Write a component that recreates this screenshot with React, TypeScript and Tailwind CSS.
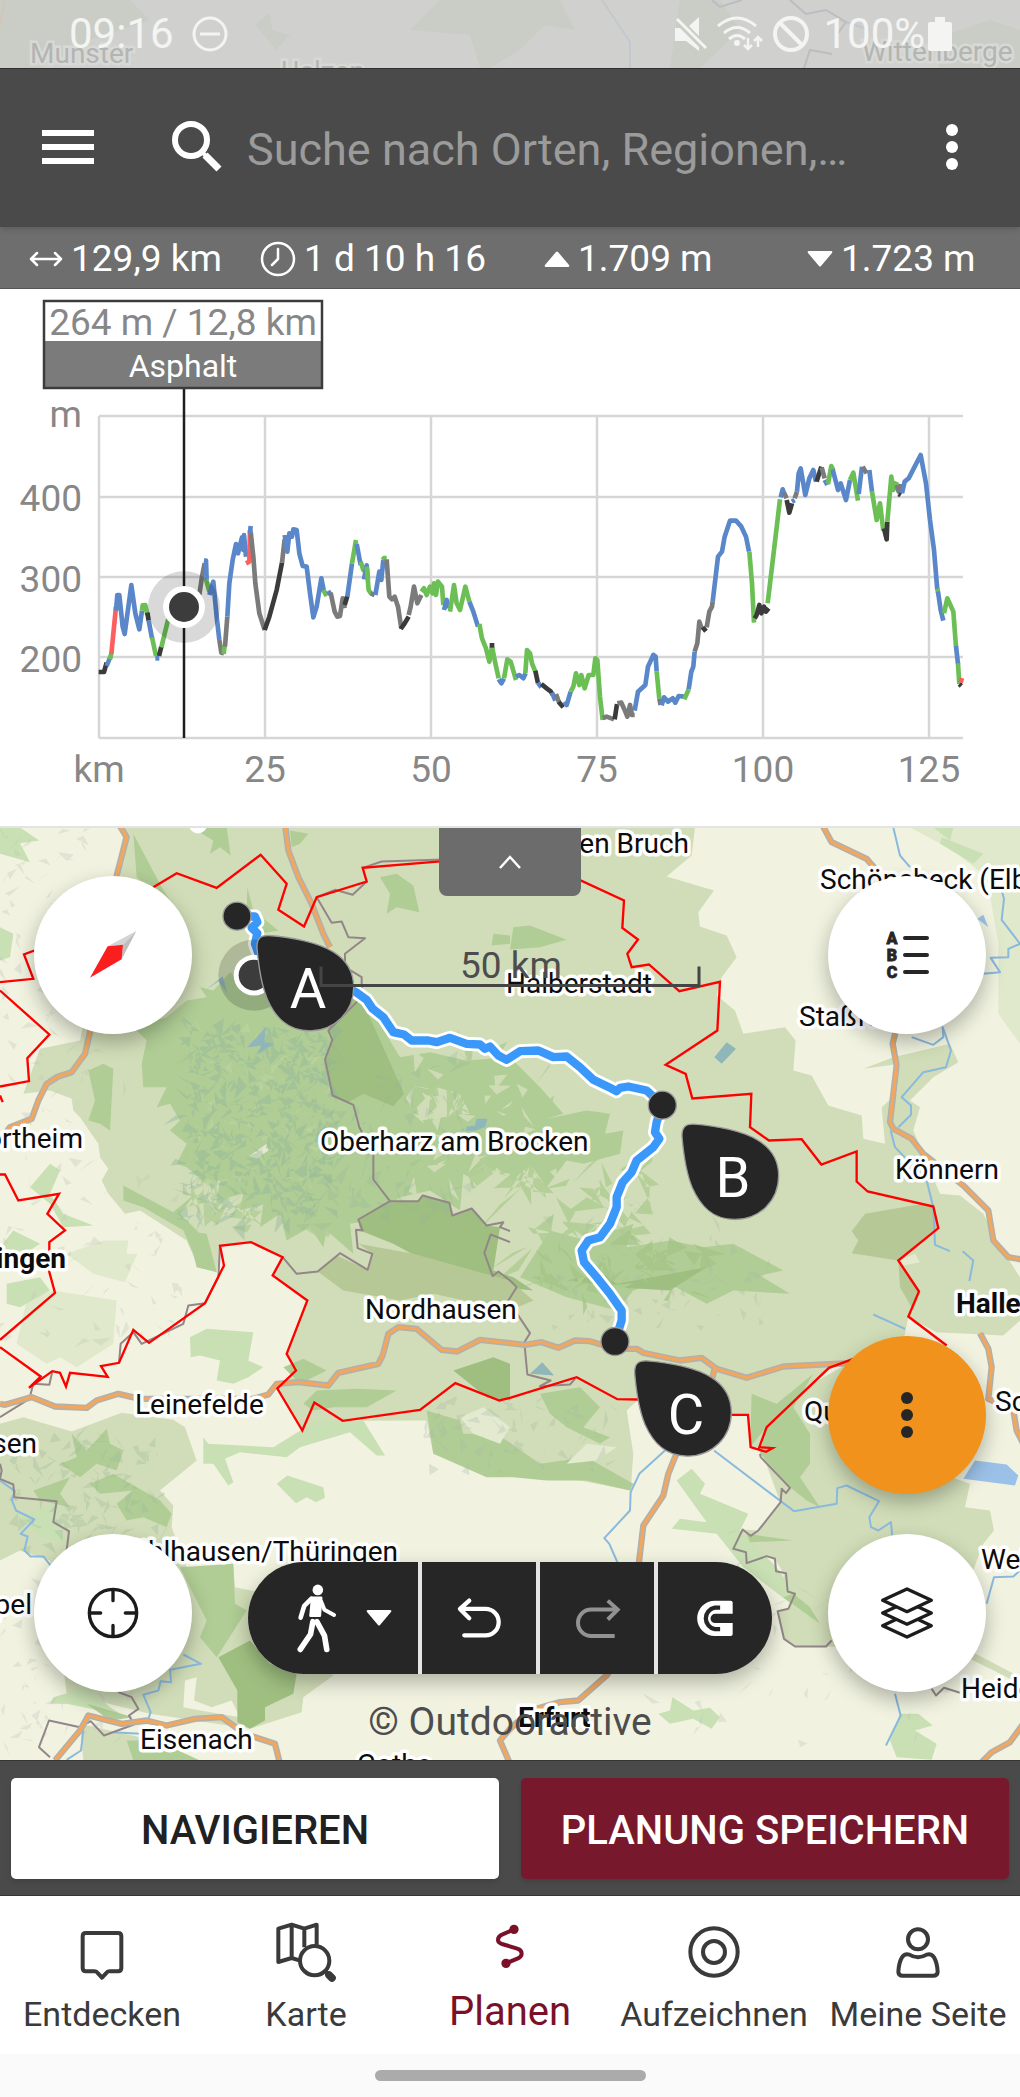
import React from "react";

type Surface = "asphalt" | "road" | "path" | "trail" | "steep";

const surfaceColors: Record<Surface, string> = {
  asphalt: "#7b7b7b",
  road: "#3b3b3b",
  path: "#5987ca",
  trail: "#6cbf55",
  steep: "#fd5e60",
};

// Elevation profile, split by surface. Three units per chart pixel.
const profile: [Surface, string][] = [
  ["road", "296,1146 312,1146 320,1118"],
  ["path", "320,1128 332,1098"],
  ["trail", "330,1108 334,1090"],
  ["steep", "334,1092 348,950"],
  ["path", "348,962 352,915 358,915 368,1010 374,1032 394,885 406,970 418,1018 426,962"],
  ["trail", "426,962 428,946 436,945 442,975"],
  ["road", "442,968 446,992"],
  ["path", "446,992 456,1045"],
  ["trail", "456,1042 468,1098"],
  ["path", "466,1105 478,1105"],
  ["road", "477,1098 484,1070"],
  ["trail", "484,1072 504,990 530,950 590,930"],
  ["asphalt", "598,915 606,860 614,820"],
  ["path", "612,812 618,812 620,870"],
  ["trail", "618,868 628,905"],
  ["path", "628,915 640,875 650,980 658,1050"],
  ["asphalt", "658,1050 664,1088 672,1090"],
  ["trail", "671,1092 674,1065"],
  ["asphalt", "675,1070 682,980"],
  ["path", "682,980 688,880 698,810 708,762 714,790 726,742 730,780 732,735 738,800"],
  ["steep", "738,820 748,815 750,720"],
  ["asphalt", "752,725 760,800 766,880 778,970 794,1020"],
  ["path", "750,732 752,708"],
  ["road", "794,1020 808,980 830,900 846,818"],
  ["asphalt", "846,818 854,748"],
  ["path", "854,735 862,785 868,730 876,740 880,718 890,720 898,790 908,828 920,830 930,910 940,982 950,950 964,865 972,905"],
  ["trail", "970,900 980,918"],
  ["path", "982,912 994,905"],
  ["asphalt", "992,908 1004,965 1012,980 1020,978 1028,925 1034,955"],
  ["road", "1034,945 1042,918"],
  ["path", "1042,920 1056,820"],
  ["trail", "1056,820 1068,750"],
  ["path", "1070,762 1082,825"],
  ["trail", "1082,815 1090,840 1094,832"],
  ["path", "1092,868 1100,826 1104,870"],
  ["trail", "1100,830 1106,900 1114,912"],
  ["asphalt", "1112,910 1124,915"],
  ["path", "1126,915 1138,845 1144,870 1150,810"],
  ["trail", "1148,810 1152,804 1160,804"],
  ["asphalt", "1160,808 1168,920 1176,928 1184,920 1194,950 1204,1015"],
  ["road", "1202,1017 1214,1000 1226,980"],
  ["asphalt", "1226,975 1232,950 1242,890 1252,940 1264,915"],
  ["trail", "1264,905 1272,895 1280,915 1290,890 1298,910 1302,880 1308,915 1314,875 1326,890 1330,945"],
  ["path", "1332,960 1340,930 1346,955"],
  ["trail", "1350,965 1362,885 1370,940 1380,960 1396,890 1408,935"],
  ["path", "1408,935 1420,965 1434,1010"],
  ["trail", "1438,1002 1446,1045 1458,1075 1468,1115 1476,1070 1486,1120 1496,1165"],
  ["road", "1469,1066 1483,1066"],
  ["path", "1496,1168 1504,1180 1512,1166"],
  ["trail", "1512,1165 1522,1108 1532,1115 1548,1170"],
  ["path", "1548,1160 1558,1155 1570,1165 1577,1150"],
  ["trail", "1576,1150 1581,1080 1590,1090 1596,1120 1606,1145"],
  ["road", "1606,1142 1614,1180"],
  ["path", "1614,1178 1624,1192"],
  ["road", "1624,1182 1640,1195 1652,1204 1658,1214"],
  ["path", "1656,1208 1666,1232"],
  ["asphalt", "1668,1212 1678,1240"],
  ["road", "1676,1236 1690,1252"],
  ["path", "1694,1235 1700,1245 1712,1205"],
  ["trail", "1712,1205 1720,1190 1728,1150 1738,1185 1744,1155 1754,1195 1766,1155 1780,1155 1786,1105 1792,1110 1800,1220 1808,1290"],
  ["asphalt", "1808,1284 1820,1280 1842,1288"],
  ["road", "1844,1288 1851,1242"],
  ["asphalt", "1852,1240 1864,1238 1874,1260 1882,1280 1890,1245 1896,1275 1904,1275"],
  ["path", "1904,1262 1914,1205 1936,1185 1944,1130 1960,1095 1967,1100 1970,1145"],
  ["trail", "1970,1145 1978,1226"],
  ["asphalt", "1978,1226 1982,1245"],
  ["path", "1985,1246 1992,1222 2004,1235 2018,1225 2026,1238 2036,1218 2052,1220"],
  ["trail", "2053,1228 2066,1198"],
  ["path", "2066,1198 2074,1145 2080,1130 2084,1085"],
  ["asphalt", "2084,1085 2092,1060 2098,995 2106,1018"],
  ["road", "2108,1012 2118,1024"],
  ["asphalt", "2120,1012 2128,965 2136,950 2138,935"],
  ["path", "2138,935 2154,800 2166,785 2174,740 2190,692 2208,692 2224,710 2238,740 2247,785"],
  ["trail", "2248,785 2256,880 2262,998"],
  ["road", "2264,985 2270,975 2278,945 2284,970 2292,950 2298,965 2306,955"],
  ["trail", "2303,940 2322,780 2340,628"],
  ["path", "2342,622 2348,598 2352,610"],
  ["asphalt", "2352,608 2360,625"],
  ["road", "2360,630 2368,668 2376,640"],
  ["path", "2376,635 2384,630"],
  ["asphalt", "2384,625 2391,605"],
  ["path", "2391,605 2396,550 2402,535 2416,615 2428,565 2440,540 2448,575"],
  ["road", "2450,575 2464,530"],
  ["asphalt", "2465,532 2474,565"],
  ["path", "2474,570 2482,585"],
  ["trail", "2484,582 2494,528 2500,540"],
  ["path", "2498,538 2514,600 2522,580 2538,630 2550,570"],
  ["trail", "2550,570 2560,548 2574,632"],
  ["path", "2576,612 2586,530"],
  ["asphalt", "2588,530 2600,550"],
  ["path", "2608,540 2616,605"],
  ["trail", "2616,605 2630,690 2640,640 2650,722"],
  ["road", "2652,715 2660,748 2662,695"],
  ["trail", "2662,695 2674,560 2680,600 2690,575"],
  ["asphalt", "2690,585 2696,605 2702,582"],
  ["road", "2696,612 2702,616"],
  ["path", "2706,610 2714,575 2726,565 2762,495 2778,580 2790,690 2802,780 2812,900"],
  ["trail", "2812,896 2814,908"],
  ["path", "2814,905 2822,960 2830,992"],
  ["trail", "2832,970 2842,925 2860,965 2868,1070"],
  ["path", "2868,1068 2874,1122"],
  ["trail", "2874,1120 2878,1182"],
  ["road", "2878,1182 2884,1188"],
  ["steep", "2882,1178 2886,1164"],
];

const stats = [
  { icon: "distance", value: "129,9 km" },
  { icon: "time", value: "1 d 10 h 16" },
  { icon: "up", value: "1.709 m" },
  { icon: "down", value: "1.723 m" },
];

// Map layers, bottom to top
const areas: [string, string][] = [
  // regional parks
  ["#d1ddb8", "M375 51L2085 51L2075 135L2000 198L2142 240L2095 305L2100 348L2180 375L2210 440L2165 500L2150 555L2205 600L2230 670L2355 650L2387 690L2380 780L2435 795L2485 885L2585 915L2590 985L2655 1000L2645 890L2690 850L2700 760L2590 775L2680 740L2850 700L2875 755L2800 800L2730 870L2760 890L2740 960L2820 1150L2880 1155L2950 1210L2990 1290L3060 1400V1530L3010 1575L2810 1565L2725 1520L2700 1640L2490 1672L2300 1850L2278 1910L2252 1910L2244 1813L2198 1813L1915 1767L1880 1800L1900 1930L1892 2040L1740 2010L1650 2000L1530 1980L1480 2000L1300 1930L1280 1830L1028 1831L905 1860L832 1734L888 1680L860 1630L922 1470L818 1395L848 1340L753 1295L660 1306L650 1385L590 1360L560 1290L420 1200L375 1210L325 1150L305 1110L325 1075L300 1040L295 1000L240 920L220 900L215 865L150 840L70 850L120 715L240 690L345 195Z"],
  ["#d1ddb8", "M2280 1910L2300 1850L2400 1740L2560 1650L2740 1960L2910 2020L2895 2090L2970 2100L2982 2160L2950 2200L2900 2330L2870 2500L3060 2600V2850H2940L2800 2520L2478 2508H2385L2352 2485L2333 2402L2365 2395L2385 2350L2358 2343L2350 2288L2325 2245L2300 2237L2238 2258L2200 2215L2228 2157L2275 2160L2342 2078Z"],
  ["#f1f3e0", "M2700 2550L2860 2520L3060 2620V2850H2600Z"],
  ["#d1ddb8", "M0 1840L70 1820L215 1863L365 1807L520 1828L555 1850L590 1950L480 2040L520 2085L515 2150L560 2270L700 2270L705 2330L800 2350L1000 2595L910 2660L905 2705L750 2755L450 2710L200 2650L150 2250L60 2220L0 2250Z"],
  ["#f1f3e0", "M555 2610L590 2600L582 2670L635 2690L695 2670L720 2720L600 2700L550 2690Z"],
  ["#d1ddb8", "M240 2740L420 2780L420 2850H250Z"],
  ["#e0e9cb", "M2730 51H3060V700L2995 610V400L2960 200L2860 120Z"],
  ["#e0e9cb", "M200 1330L310 1290H385L380 1330H412L375 1415L280 1390Z"],
  ["#e0e9cb", "M80 1470L160 1440L350 1470L340 1600L230 1670L180 1640L140 1660L50 1600Z"],
  // light woods
  ["#c9e0b4", "M0 51H60L118 90L60 98L90 155L0 130Z"],
  ["#c9e0b4", "M90 1130L150 1060L180 1080L150 1150L190 1210L280 1245L190 1250L150 1180Z"],
  ["#c9e0b4", "M20 1420L120 1400L150 1440L60 1490L20 1480ZM40 1260L120 1300L60 1340L0 1350V1310Z"],
  ["#c9e0b4", "M0 350L40 370L30 440L0 450Z"],
  ["#c9e0b4", "M610 1880L625 1900L820 1910L950 1830L1090 1830L1155 1935H1130L1050 1865L900 1910L860 1940L720 1925L675 1945L700 2015L685 2025L640 1960L610 1960Z"],
  ["#c9e0b4", "M830 2020L862 1995L970 2030L975 2062L948 2075L920 2060L888 2078Z"],
  ["#c9e0b4", "M570 1580L620 1555L760 1565L745 1650L790 1670L745 1700L700 1720L650 1710L660 1650L600 1635L572 1640Z"],
  ["#c9e0b4", "M2030 2010L2075 1975L2115 2020L2100 2050L2245 2110L2220 2160L2330 2270L2450 2440L2230 2270L2150 2170L2015 2155L2040 2125L2120 2135Z"],
  ["#c9e0b4", "M1975 2710L2010 2700L2017 2660L2080 2700L2130 2692L2160 2720L2135 2755L2080 2725L2010 2740Z"],
  ["#c9e0b4", "M2700 2710H2755L2798 2745L2745 2760L2810 2800L2795 2848L2690 2840L2670 2790Z"],
  ["#c9e0b4", "M2825 80L2950 130L2920 160L2820 100ZM2800 51H2860L2850 90Z"],
  ["#c9e0b4", "M160 2660L260 2630L330 2690L370 2715L200 2680L150 2680ZM60 2120L170 2070L200 2200L120 2180Z"],
  // forest
  ["#b0cd95", "M425 760L440 690L400 650L500 620L560 570L620 560L600 530L640 540L690 485L740 520L830 560L980 650L1090 560L1140 640L1200 740L1290 725L1400 750L1530 740L1620 830L1690 910L1640 925L1760 900L1830 910L1815 970L1870 960L1860 1030L1750 1060L1700 1050L1640 1130L1590 1060L1540 1110L1450 1060L1470 1140L1390 1090L1380 1200L1290 1140L1200 1160L1110 1230L1050 1240L1060 1330L980 1260L970 1310L930 1250L860 1290L840 1210L780 1250L790 1180L720 1200L730 1150L650 1170L660 1110L610 1110L560 1070L530 1060L560 1000L510 960L540 930L510 880L470 890L500 830L430 830Z"],
  ["#b0cd95", "M400 70L485 230L550 330L480 260L410 200ZM590 60L620 51H680L692 135L660 110L630 130L640 90ZM1140 200L1190 190L1240 225L1258 305L1190 290L1160 310L1170 250ZM742 230L760 300L835 360L780 370L740 300Z"],
  ["#b0cd95", "M265 780L310 760L340 775L330 960L300 940L265 930L285 870ZM370 1125L520 1205L585 1150L540 1210L600 1270L560 1265L430 1190L370 1170Z"],
  ["#b0cd95", "M550 1260L620 1270L650 1385L590 1370L580 1330ZM870 60L925 70L900 100L875 110ZM1480 370L1530 375L1530 400L1475 405ZM1540 350L1590 345L1700 388L1620 410L1530 417Z"],
  ["#b0cd95", "M1560 1400L1650 1260L1760 1290L1900 1240L1880 1310L2010 1290L2110 1310L2200 1300L2350 1380L2280 1395L2370 1450L2200 1440L2120 1480L1990 1410L1900 1440L1850 1500L1700 1460Z"],
  ["#b0cd95", "M910 1780L950 1740L1070 1735L1190 1740L1100 1790L1000 1790L940 1800Z"],
  ["#b0cd95", "M850 1670L910 1645L980 1680L900 1720ZM1280 1800L1380 1830L1390 1870L1490 1870L1620 1960L1760 1940L1900 2020L1890 2040L1760 2010L1640 2010L1540 2000L1460 2000L1300 1930Z"],
  ["#b0cd95", "M1620 1750L1740 1730L1800 1790L1750 1850L1830 1880L1800 1900L1700 1850L1650 1810Z"],
  ["#b0cd95", "M2255 1750L2330 1780L2440 1690L2380 1790L2430 1870L2430 1960L2400 2000L2460 2090L2420 2070L2370 2030L2280 1930L2300 1850L2250 1910ZM2240 2170L2380 2190L2250 2195ZM2380 2350L2430 2390L2460 2440L2350 2360Z"],
  ["#b0cd95", "M215 1870L260 1920L320 1855L330 1900L370 1920L350 1980L290 1960L240 2000L180 1960L230 1940ZM100 2040L210 2000L180 2050L210 2090L120 2070ZM270 2020L340 1990L480 2070L515 2110L500 2150L430 2120L380 2130L350 2080L400 2040L300 2050Z"],
  ["#b0cd95", "M540 2270L700 2260L705 2380L740 2400L650 2540L600 2480L620 2430ZM380 2790L470 2790L600 2850H400ZM260 2680L400 2720L330 2730Z"],
  ["#9fbf80", "M985 650L1060 560L1100 600L1212 850L1180 887L1090 850L1045 875L998 855L975 747L997 688Z"],
  ["#9fbf80", "M1075 1227L1170 1175L1255 1172L1270 1155L1348 1177L1357 1215L1415 1194L1460 1245L1500 1250L1480 1380L1540 1400L1600 1440L1400 1420L1290 1360L1180 1300L1080 1260Z"],
  ["#9fbf80", "M655 2540L750 2490L810 2560L890 2590L880 2650L795 2690V2730L750 2755L712 2735V2640ZM1700 1410L1800 1380L1850 1420L2120 1370L2010 1440L1850 1430ZM1360 1680L1480 1640L1530 1660V1770L1460 1760Z"],
  ["#b7c897", "M953 1383L1010 1335L1103 1378L1117 1330L1075 1300L1240 1330L1420 1380L1530 1410L1600 1470L1530 1500L1300 1450L1200 1470L1030 1440Z"],
  ["#b7c897", "M2595 1210L2770 1180L2800 1190L2810 1250L2695 1350L2760 1445L2740 1500L2700 1430L2695 1350L2555 1328L2575 1290L2555 1262Z"],
  // clearings
  ["#d1ddb8", "M1250 890L1310 830L1380 850L1410 910L1330 920L1260 930ZM1390 1110L1460 1080L1530 1090V1180L1440 1150Z"],
  ["#e3ead0", "M750 1035L800 1000L805 1020L770 1045ZM1380 1820L1450 1790L1530 1850L1500 1900L1420 1870ZM1700 1960L1760 1900L1850 1910L1790 1950ZM2695 1350L2745 1330L2760 1355L2710 1365Z"],
  // water
  ["#8fb6b8", "M2143 740L2180 695L2208 715L2165 760ZM1590 1690L1627 1655L1662 1695ZM1385 950L1425 945L1430 925L1468 925L1468 945L1420 962L1385 960Z"],
  ["#9cc1e8", "M2890 2005L2925 1950L3020 1962L3055 1995L3045 2025ZM2932 325L2950 313L2965 350Z"],
];

const roads = [
  "M350 30L380 80L350 195L270 665L255 730L215 785L175 798L140 820L115 870L95 925L30 950L0 990",
  "M855 40L865 120L895 200L935 280L970 370L990 410",
  "M0 1780L15 1783L95 1760L165 1788L260 1792L290 1770L355 1750L420 1765L760 1765L805 1752L830 1720L895 1715L985 1725L1015 1687L1135 1660L1148 1635L1165 1570L1195 1550L1250 1555L1325 1618L1372 1623L1440 1588L1530 1598L1575 1603L1625 1595L1675 1612L1725 1590L1770 1592L1845 1615L1910 1615L1930 1627L2040 1650L2105 1642L2150 1675L2240 1702L2350 1668L2550 1658",
  "M2145 1670L2135 1710L2070 1850L2025 1940L2005 1990L1990 2055L1930 2145L1917 2255L1910 2470L1820 2595L1735 2670L1680 2675L1590 2700L1530 2755L1500 2790L1530 2860",
  "M165 2850L240 2760L265 2715L365 2740L440 2730L500 2745L585 2725L665 2720L735 2770L825 2800L840 2860",
  "M2465 40L2495 95L2600 145L2700 260L2685 672L2678 700L2690 765L2670 935L2680 955L2735 985L2770 1030L2890 1125L2965 1200L2980 1290L3025 1340L3070 1348",
  "M2940 1568L2965 1615L2975 1670L2965 1765L3040 1800L3050 1860L3070 1900",
  "M2940 2860L2975 2825L3030 2795L3070 2740",
];

const rivers = [
  "M2680 51L2700 135L2730 170M3005 240L3012 265L3005 328L3060 400L3025 415V440L2972 442L3000 485L2950 490",
  "M2735 680L2800 703L2830 680L2828 650L2853 720L2838 770L2770 785L2705 860L2733 885V913L2695 950M2672 960L2685 1010L2780 1110L2800 1190L2805 1303L2850 1322M2888 1322L2920 1350L2908 1412",
  "M1995 1920L1918 1990L1892 2045L1890 2100L1813 2183L1828 2200L1852 2255M2142 1920L2382 2102L2510 2080L2512 2033L2540 2025L2637 2072L2608 2120L2613 2150L2635 2160L2673 2135L2677 2180M2960 2380L2982 2300L3040 2298L3060 2280M2685 2650L2702 2715L2658 2805M2620 1512L2715 1555",
  "M0 2010L45 2042L35 2068L48 2100L103 2127L62 2170L83 2178L73 2220L92 2238H130L160 2275M550 2532L603 2560L510 2578L513 2615L482 2612L475 2640L430 2653L452 2705L445 2725M250 2760L243 2820L200 2848M340 2765L420 2770",
];

const borders = [
  "M950 260L995 337L1025 333L1045 380L1095 383L1035 430V470L1085 500V560L985 660L997 688L975 747L998 855L1060 883L1078 950L1120 1030V1107L1170 1172H1255L1268 1155L1348 1177L1357 1215L1415 1194L1460 1245L1510 1235L1500 1250L1530 1262M1530 1295L1472 1272L1453 1327L1478 1397L1495 1383L1530 1410L1550 1430L1525 1470L1590 1568L1573 1595L1582 1692L1652 1710L1620 1727L1710 1722L1725 1705",
  "M1170 1172L1075 1227L1088 1260L1068 1258L1073 1313L1117 1330L1103 1378L1020 1328L953 1383L890 1390L848 1340M950 260L1005 238L1058 253L1100 213M1088 172L1145 153L1330 147",
  "M660 1306L655 1400L615 1478L565 1485L550 1540L425 1600L400 1565L362 1600L357 1657",
  "M2280 1930L2282 1940L2370 2032L2358 2048L2345 2035L2342 2075L2275 2160L2252 2176L2228 2157L2200 2215L2238 2225L2240 2258L2300 2237L2325 2245L2328 2282L2358 2288L2363 2343L2385 2350L2365 2395L2333 2402L2352 2485L2385 2508H2478L2495 2490M2795 2635L2808 2655L2832 2632L2890 2650",
  "M0 1820L88 1765L100 1720L148 1723L157 1682M0 1960L5 1980L0 2005L40 2022L43 2060L170 2072L160 2135L207 2162L200 2220M355 2645L395 2660L415 2695L387 2715L402 2742L312 2775L272 2732L240 2750L147 2730L117 2810L150 2840",
];

const highlight = [
  "M460 230L530 188L650 232L782 133L860 220L835 298L912 348L950 260L1100 213L1088 172L1330 152L1742 210L1872 270L1867 352L1914 387L1882 430L1895 470L1947 462L2038 542L2160 514L2152 660L1997 763L2057 790L2077 864L2254 850L2250 950L2307 990L2405 986L2464 1062L2570 1023V1113L2603 1143L2800 1188L2815 1253L2695 1350L2757 1443L2725 1518L2840 1605",
  "M2560 1645L2487 1672L2300 1850L2278 1910L2318 1913L2298 1924L2252 1910L2244 1813H2198L1915 1767L1852 1766L1730 1700L1530 1762L1498 1770L1366 1718L1260 1798L1028 1831L943 1776L907 1860L832 1734L888 1680L860 1630L922 1470L818 1395L848 1340L753 1295L660 1306L672 1365L615 1478L447 1597L400 1558L357 1657L303 1667L323 1699L210 1687L198 1728L180 1687L157 1682L87 1732L122 1698L0 1610",
  "M0 1588L165 1447L148 1385V1295L195 1260L142 1210L177 1150L55 1170L15 1092H0M103 420L72 432L100 505L0 515M0 540L148 672L82 743L87 812L0 828M0 855L8 875",
];

const routeLine =
  "M711 317L765 318L772 335L755 352L772 368L765 400L790 470L980 500L1068 545L1100 568L1118 595L1150 620L1180 665L1212 672L1235 690L1285 690L1310 695L1350 682L1400 700L1440 702L1455 715L1470 708L1495 735L1520 748L1560 722L1615 720L1660 740L1700 738L1740 770L1780 808L1830 832L1850 842L1860 832L1885 828L1940 840L1987 884L1970 935L1965 965L1978 985L1960 1010L1910 1050L1895 1085L1868 1115L1850 1160L1850 1190L1830 1240L1800 1280L1765 1290L1745 1320L1752 1355L1790 1400L1830 1450L1865 1500L1865 1530L1845 1593";

const labels: { x: number; y: number; text: string; end?: boolean; bold?: boolean }[] = [
  { x: 689, y: 25, text: "Großen Bruch", end: true },
  { x: 820, y: 61, text: "Schönebeck (Elbe)" },
  { x: 799, y: 198, text: "Staßfurt" },
  { x: 506, y: 165, text: "Halberstadt" },
  { x: 83, y: 320, text: "Northeim", end: true },
  { x: 320, y: 323, text: "Oberharz am Brocken" },
  { x: 895, y: 351, text: "Könnern" },
  { x: 66, y: 440, text: "Göttingen", end: true, bold: true },
  { x: 956, y: 485, text: "Halle (Saale)", bold: true },
  { x: 365, y: 491, text: "Nordhausen" },
  { x: 135, y: 586, text: "Leinefelde" },
  { x: 37, y: 625, text: "Witzenhausen", end: true },
  { x: 398, y: 733, text: "Mühlhausen/Thüringen", end: true },
  { x: 32, y: 786, text: "Waldkappel", end: true },
  { x: 140, y: 921, text: "Eisenach" },
  { x: 357, y: 946, text: "Gotha" },
  { x: 518, y: 899, text: "Erfurt", bold: true },
  { x: 804, y: 593, text: "Querfurt" },
  { x: 995, y: 583, text: "Schkeuditz" },
  { x: 981, y: 741, text: "Weißenfels" },
  { x: 961, y: 870, text: "Heideland" },
];

const waypoints = [
  { name: "A", dot: [711, 317], pin: [0, 0] },
  { name: "B", dot: [1987, 884], pin: [1275, 566] },
  { name: "C", dot: [1845, 1593], pin: [1133, 1276] },
];

// Slivers of woodland and hill shade; seeded so that the terrain is stable between renders
const terrain = (seed: number, count: number, size: number, x: number, y: number, w: number, h: number) => {
  let s = seed * 7919;
  const rnd = () => {
    s = (s * 16807) % 2147483647;
    return s / 2147483647;
  };
  const step = () => Math.round((rnd() - 0.5) * size);
  let d = "";
  for (let i = 0; i < count; i++) {
    const px = Math.round(x + rnd() * w);
    const py = Math.round(y + rnd() * h);
    d += `M${px} ${py}l${step()} ${step()}l${step()} ${step()}z`;
  }
  return d;
};

const shading = [
  { fill: "#b0cd95", opacity: 0.9, d: terrain(3, 60, 150, 1560, 1010, 420, 420) },
  { fill: "#b0cd95", opacity: 0.9, d: terrain(9, 70, 140, 1240, 760, 380, 340) },
  { fill: "#d1ddb8", opacity: 0.9, d: terrain(19, 40, 90, 1240, 780, 500, 360) },
  { fill: "#b0cd95", opacity: 0.8, d: terrain(29, 50, 130, 600, 1090, 440, 170) },
  { fill: "#a3c386", opacity: 0.7, d: terrain(37, 40, 120, 1600, 1300, 500, 150) },
  { fill: "#8fb59a", opacity: 0.4, d: terrain(11, 380, 80, 560, 660, 440, 560) },
  { fill: "#8fb59a", opacity: 0.25, d: terrain(7, 110, 80, 930, 760, 500, 480) },
  { fill: "#c2d8a4", opacity: 0.5, d: terrain(23, 60, 60, 560, 640, 440, 500) },
  { fill: "#a9b9a6", opacity: 0.3, d: terrain(5, 80, 60, 1660, 1160, 640, 400) },
  { fill: "#9fb99b", opacity: 0.35, d: terrain(31, 110, 70, 40, 1880, 440, 330) },
  { fill: "#bcc4b8", opacity: 0.3, d: terrain(41, 90, 60, 0, 60, 380, 900) },
  { fill: "#bcc4b8", opacity: 0.3, d: terrain(43, 70, 60, 0, 1040, 560, 560) },
  { fill: "#bcc4b8", opacity: 0.3, d: terrain(53, 90, 60, 0, 2240, 460, 560) },
  { fill: "#bcc4b8", opacity: 0.3, d: terrain(61, 50, 70, 1900, 2140, 1100, 660) },
  { fill: "#a9b9a6", opacity: 0.3, d: terrain(71, 70, 70, 1280, 1760, 560, 220) },
  { fill: "#8db4c0", opacity: 0.9, d: "M742 710L797 650L793 695L823 700L768 732L785 705ZM618 538L668 497L682 550L655 512Z" },
];

const StatIcon = ({ name }: { name: string }) => {
  if (name === "distance")
    return (
      <svg viewBox="0 0 34 16" className="w-[34px] h-4" fill="none" stroke="white" strokeWidth="2.5" strokeLinecap="round" strokeLinejoin="round">
        <path d="M2 8H32M8 2L2 8L8 14M26 2L32 8L26 14" />
      </svg>
    );
  if (name === "time")
    return (
      <svg viewBox="0 0 36 36" className="size-9" fill="none" stroke="white" strokeWidth="2.5" strokeLinecap="round" strokeLinejoin="round">
        <circle cx="18" cy="18" r="16" />
        <path d="M18 8V18L12 24" />
      </svg>
    );
  return (
    <svg viewBox="0 0 26 16" className={name === "up" ? "w-[26px] h-4" : "w-[26px] h-4 rotate-180"} fill="white">
      <path d="M12 1Q13 0 14 1L25 14Q26 16 24 16H2Q0 16 1 14Z" />
    </svg>
  );
};

const StatusBar = () => (
  <div className="relative h-[68px] overflow-hidden bg-[#d0d1ce] flex items-center pl-[69px] pr-[68px] text-[42px] leading-none text-[#f4f4f2]">
    <svg className="absolute inset-0 w-full h-full" viewBox="0 0 1020 68" preserveAspectRatio="xMinYMin slice">
      <path fill="#c9cdc5" d="M0 0H130L150 20L90 40L40 68H0ZM255 25L270 12L272 30L290 35L275 50L268 40ZM410 30L440 0H560L575 30L545 25L520 50L490 68H480L470 35ZM680 0H720L740 30L700 68H670ZM930 40L990 20L1020 30V68H940Z" />
      <path fill="none" stroke="#c2c8cd" strokeWidth="2" d="M602 0L630 42V68M840 20L870 30" />
      <path fill="none" stroke="#bcbcc2" strokeWidth="2" d="M712 0L720 7L742 0M790 0L806 14L826 10L846 22L836 36M804 68L810 50L832 54" />
      <path fill="none" stroke="#d3c5b8" strokeWidth="2" d="M5 0L0 25" />
      <g className="text-[28px]" fill="#b3b5b2" stroke="#d8d9d6" strokeWidth="5" paintOrder="stroke">
        <text x="30" y="63">Munster</text>
        <text x="281" y="81">Uelzen</text>
        <text x="862" y="61">Wittenberge</text>
      </g>
    </svg>
    <span className="relative">09:16</span>
    <svg viewBox="0 0 36 36" className="relative size-9 ml-[18px]" fill="none" stroke="currentColor" strokeWidth="3">
      <circle cx="18" cy="18" r="16" />
      <path d="M8 18H28" />
    </svg>
    <div className="relative ml-auto flex items-center gap-[10px]">
      <svg viewBox="0 0 32 36" className="w-8 h-9" fill="currentColor">
        <path d="M0 12H5L24 31V35L11 25H0ZM14 10L24 1V20Z" />
        <path d="M2 3L31 32" stroke="currentColor" strokeWidth="3" />
      </svg>
      <svg viewBox="0 0 46 36" className="w-[46px] h-9" fill="none" stroke="currentColor" strokeWidth="3">
        <path d="M1 10Q20 -6 39 10M7 17Q20 6 33 17M12 23Q20 16 28 23" />
        <circle cx="20" cy="27" r="3" fill="currentColor" stroke="none" />
        <path d="M31 22V33M27 29L31 33L35 29M41 31V21M37 25L41 21L45 25" strokeWidth="2.5" />
      </svg>
      <svg viewBox="0 0 36 36" className="size-9 mr-1" fill="none" stroke="currentColor" strokeWidth="4">
        <circle cx="18" cy="18" r="16" />
        <path d="M7 7L29 29" />
      </svg>
      <span>100%</span>
      <svg viewBox="0 0 24 36" className="w-6 h-9 -ml-[7px]" fill="currentColor">
        <path d="M7 1H17V6H22Q24 6 24 8V33Q24 35 22 35H2Q0 35 0 33V8Q0 6 2 6H7Z" />
      </svg>
    </div>
  </div>
);

const SearchHeader = () => (
  <header className="bg-[#4a4a4a] border-t border-[#303030] flex items-center h-[159px] px-[38px] shadow-md relative">
    <button aria-label="Menü">
      <svg viewBox="0 0 60 60" className="size-[60px]" stroke="white" strokeWidth="6">
        <path d="M4 15H56M4 29H56M4 43H56" />
      </svg>
    </button>
    <label htmlFor="search" className="ml-[69px]">
      <svg viewBox="0 0 60 60" className="size-[60px]" fill="none" stroke="white" strokeWidth="6">
        <circle cx="24" cy="22" r="16" />
        <path d="M35 34L40 39" strokeWidth="4" />
        <path d="M38 37L52 51" strokeWidth="7" />
      </svg>
    </label>
    <input
      id="search"
      type="search"
      aria-label="Suche"
      placeholder="Suche nach Orten, Regionen,…"
      className="ml-[20px] pt-1 flex-1 min-w-0 bg-transparent text-[45px] text-white placeholder:text-[#9b9b9b] outline-none"
    />
    <button aria-label="Mehr">
      <svg viewBox="0 0 60 60" className="size-[60px]" fill="white">
        <circle cx="30" cy="12" r="6" />
        <circle cx="30" cy="29" r="6" />
        <circle cx="30" cy="46" r="6" />
      </svg>
    </button>
  </header>
);

const ElevationChart = () => (
  <svg viewBox="0 -1 1020 537" className="w-full h-auto block" role="img" aria-label="Höhenprofil">
    <path
      fill="none"
      stroke="#d6d6d6"
      strokeWidth="2.5"
      d="M99 126H963M99 207H963M99 287H963M99 367H963M99 448H963M99 126V448M265 126V448M431 126V448M597 126V448M763 126V448M929 126V448"
    />
    <g className="text-[37px]" fill="#878787">
      <g textAnchor="end">
        <text x="82" y="137">m</text>
        <text x="82" y="221">400</text>
        <text x="82" y="302">300</text>
        <text x="82" y="382">200</text>
      </g>
      <g textAnchor="middle">
        <text x="99" y="492">km</text>
        <text x="265" y="492">25</text>
        <text x="431" y="492">50</text>
        <text x="597" y="492">75</text>
        <text x="763" y="492">100</text>
        <text x="929" y="492">125</text>
      </g>
    </g>
    <g transform="scale(0.33333)" fill="none" strokeWidth="14" strokeLinejoin="round">
      {profile.map(([surface, points], index) => (
        <polyline key={index} points={points} stroke={surfaceColors[surface]} />
      ))}
    </g>
    <path d="M184 99V448" stroke="#1e1e1e" strokeWidth="2.5" />
    <circle cx="184" cy="317" r="36" fill="black" fillOpacity="0.15" />
    <circle cx="184" cy="317" r="21" fill="white" />
    <circle cx="184" cy="317" r="15" fill="#3c3c3c" />
    <rect x="44" y="11" width="278" height="87" fill="white" />
    <rect x="44" y="51" width="278" height="47" fill="#7b7b7b" />
    <rect x="44" y="11" width="278" height="87" fill="none" stroke="#3c3c3c" strokeWidth="2.5" />
    <text x="183" y="45" textAnchor="middle" fill="#878787" className="text-[37px]">264 m / 12,8 km</text>
    <text x="183" y="87" textAnchor="middle" fill="white" className="text-[32px]">Asphalt</text>
  </svg>
);

const MapCanvas = () => (
  <svg viewBox="0 0 1020 933" preserveAspectRatio="xMidYMid slice" className="absolute inset-0 w-full h-full" role="img" aria-label="Karte">
    <g transform="scale(0.33333) translate(0 -51)">
      <rect y="51" width="3060" height="2799" fill="#f1f3e0" />
      {areas.map(([fill, d], index) => (
        <path key={index} d={d} fill={fill} />
      ))}
      {shading.map((item, index) => (
        <path key={index} d={item.d} fill={item.fill} fillOpacity={item.opacity} />
      ))}
      <g fill="none" strokeLinejoin="round">
        {rivers.map(d => (
          <path key={d} d={d} stroke="#8ab9de" strokeWidth="6" />
        ))}
        {borders.map(d => (
          <path key={d} d={d} stroke="#938689" strokeWidth="6" />
        ))}
        {roads.map(d => (
          <path key={d} d={d} stroke="#b3b0ac" strokeWidth="19" />
        ))}
        {roads.map(d => (
          <path key={d} d={d} stroke="#f4a75a" strokeWidth="9" />
        ))}
        {highlight.map(d => (
          <path key={d} d={d} stroke="#ff0000" strokeWidth="7" strokeLinejoin="miter" />
        ))}
      </g>
    </g>
    <circle cx="198" cy="-3" r="9" fill="white" />
    <g className="text-[28px]" fill="#0c0c0c" stroke="white" strokeWidth="7" strokeLinejoin="round" paintOrder="stroke">
      {labels.map(label => (
        <text
          key={label.text}
          x={label.x}
          y={label.y}
          textAnchor={label.end ? "end" : "start"}
          className={label.bold ? "font-bold" : ""}
        >
          {label.text}
        </text>
      ))}
    </g>
    <g transform="scale(0.33333) translate(0 -51)">
      <g fill="none" strokeLinejoin="round" strokeLinecap="round">
        <path d={routeLine} stroke="white" strokeWidth="42" />
        <path d={routeLine} stroke="#3a98fb" strokeWidth="25" />
      </g>
      <circle cx="762" cy="494" r="107" fill="black" fillOpacity="0.16" />
      <circle cx="762" cy="494" r="61" fill="white" />
      <circle cx="762" cy="494" r="46" fill="#3c3c3c" />
      {waypoints.map(({ name, dot, pin }) => (
        <g key={name} fill="#262626" stroke="#9a9a9a" strokeWidth="4">
          <circle cx={dot[0]} cy={dot[1]} r="42" />
          <path
            transform={`translate(${pin[0]} ${pin[1]})`}
            d="M771 412C770 384 782 374 806 375C876 380 956 396 1000 424C1042 450 1061 486 1061 530C1061 604 1004 661 930 661C862 661 826 620 802 566C783 520 775 460 771 412Z"
          />
        </g>
      ))}
    </g>
    <g fill="white" textAnchor="middle" className="text-[56px]">
      <text x="308" y="180">A</text>
      <text x="733" y="369">B</text>
      <text x="686" y="606">C</text>
    </g>
    <path d="M321 139V158H699V139" fill="none" stroke="#454545" strokeWidth="3" />
    <text x="511" y="150" textAnchor="middle" fill="#4d4d4d" className="text-[37px]">50 km</text>
  </svg>
);

const RoundButton = ({ label, orange, children }: { label: string; orange?: boolean; children: React.ReactNode }) => (
  <button
    aria-label={label}
    className={`flex items-center justify-center size-[158px] rounded-full shadow-[0_8px_20px_rgba(0,0,0,0.28)] ${
      orange ? "bg-[#f0921b]" : "bg-white"
    }`}
  >
    {children}
  </button>
);

const Toolbar = () => (
  <div className="absolute bottom-[86px] left-1/2 -translate-x-1/2 flex h-[112px] gap-1 rounded-full overflow-hidden bg-[#e4e4e4] shadow-[0_8px_20px_rgba(0,0,0,0.28)]">
    <button aria-label="Aktivität wählen" className="flex items-center justify-center gap-7 w-[170px] pl-5 bg-[#262626]">
      <svg viewBox="885 850 130 213" className="w-[43px] h-[71px]" fill="none" stroke="white" strokeLinecap="round" strokeLinejoin="round">
        <circle cx="954" cy="870" r="16" fill="white" stroke="none" />
        <path d="M937 894H964L960 948H932Z" fill="white" strokeWidth="8" />
        <path d="M934 897L913 918L902 954" strokeWidth="14" />
        <path d="M964 905L974 930L1003 946" strokeWidth="12" />
        <path d="M939 966L932 1004L901 1050M951 966L974 1008L981 1050" strokeWidth="17" />
      </svg>
      <svg viewBox="0 0 26 16" className="w-[26px] h-4" fill="white">
        <path d="M2 0H24Q26 0 25 2L14 15Q13 16 12 15L1 2Q0 0 2 0Z" />
      </svg>
    </button>
    <button aria-label="Rückgängig" className="flex items-center justify-center w-[114px] bg-[#262626]">
      <svg viewBox="1365 882 140 130" className="w-[47px] h-[43px]" fill="none" stroke="white" strokeWidth="13" strokeLinecap="round" strokeLinejoin="round">
        <path d="M1380 918H1453A40 40 0 0 1 1453 998H1389M1404 893L1376 918L1404 946" />
      </svg>
    </button>
    <button aria-label="Wiederholen" className="flex items-center justify-center w-[114px] bg-[#262626]">
      <svg viewBox="187 882 140 130" className="w-[47px] h-[43px]" fill="none" stroke="#929292" strokeWidth="12">
        <path d="M316 920H238A40 40 0 0 0 238 1000H309" />
        <path d="M288 893L318 920L288 950" />
      </svg>
    </button>
    <button aria-label="Wegen folgen" className="flex items-center justify-center w-[114px] bg-[#262626]">
      <svg viewBox="555 895 115 115" className="size-[38px]" fill="white">
        <path d="M660 900H612A53 53 0 0 0 612 1007H660Q666 1007 666 1001V968H613A14 14 0 0 1 613 940H666V906Q666 900 660 900Z" />
        <path d="M628 921H612A33 33 0 0 0 612 986H628" fill="none" stroke="#262626" strokeWidth="13" />
      </svg>
    </button>
  </div>
);

const MapView = () => (
  <main className="relative flex-1 min-h-[900px] overflow-hidden border-t-2 border-[#e3e3e3]">
    <MapCanvas />
    <button
      aria-label="Höhenprofil einklappen"
      className="absolute top-0 left-1/2 -translate-x-1/2 flex items-center justify-center w-[142px] h-[68px] rounded-b-lg bg-[#6c6c6c]"
    >
      <svg viewBox="0 0 24 14" className="w-6 h-[14px]" fill="none" stroke="white" strokeWidth="2.5">
        <path d="M2 13L12 2L22 13" />
      </svg>
    </button>
    <div className="absolute top-12 inset-x-[34px] flex justify-between">
      <RoundButton label="Kompass">
        <svg viewBox="251 345 180 180" className="size-[60px]">
          <path d="M411 363L325 409L371 404Z" fill="#d4d4d4" />
          <path d="M411 363L371 404L367 448Z" fill="#bebebe" />
          <path d="M325 409L371 404L367 448L272 503Z" fill="#fb1e1e" />
        </svg>
      </RoundButton>
      <RoundButton label="Wegpunkte">
        <svg viewBox="0 0 60 60" className="size-[60px]" fill="#262626">
          <g className="text-[16px] font-black" textAnchor="middle" stroke="#262626" strokeWidth="0.8">
            <text x="15" y="19">A</text>
            <text x="15" y="36">B</text>
            <text x="15" y="53">C</text>
          </g>
          <path d="M28 13H50M28 30H50M28 47H50" stroke="#262626" strokeWidth="4" strokeLinecap="round" />
        </svg>
      </RoundButton>
    </div>
    <div className="absolute bottom-[68px] inset-x-[34px] flex items-end justify-between">
      <RoundButton label="Standort">
        <svg viewBox="250 847 180 180" className="size-[60px]" fill="none" stroke="#1c1c1c" strokeWidth="10" strokeLinecap="round">
          <circle cx="340" cy="937" r="71" />
          <path d="M340 868V900M340 974V1006M271 937H303M377 937H409" />
        </svg>
      </RoundButton>
      <div className="flex flex-col gap-10">
        <RoundButton label="Optionen" orange>
          <svg viewBox="0 0 60 60" className="size-[60px]" fill="#262626">
            <circle cx="30" cy="13" r="6" />
            <circle cx="30" cy="30" r="6" />
            <circle cx="30" cy="47" r="6" />
          </svg>
        </RoundButton>
        <RoundButton label="Kartenebenen">
          <svg viewBox="1100 847 180 180" className="size-[60px]" fill="white" stroke="#1c1c1c" strokeWidth="10" strokeLinejoin="round">
            <path d="M1190 941L1263 975L1190 1009L1117 975Z" />
            <path d="M1190 903L1263 937L1190 971L1117 937Z" />
            <path d="M1190 865L1263 899L1190 933L1117 899Z" />
          </svg>
        </RoundButton>
      </div>
    </div>
    <Toolbar />
    <p className="absolute bottom-[14px] inset-x-0 text-center text-[39px] leading-[48px] text-[#4d4d4d]">© Outdooractive</p>
  </main>
);

const navItems = [
  {
    label: "Entdecken",
    icon: (
      <path d="M42 33H138Q148 33 148 43V138Q148 148 138 148H112Q106 148 102 154L90 167L78 154Q74 148 68 148H42Q32 148 32 138V43Q32 33 42 33Z" />
    ),
  },
  {
    label: "Karte",
    icon: (
      <>
        <path d="M122 68V8L85 20L47 8L7 20V120L47 108L70 115M47 8V108M85 20V76" />
        <circle cx="116" cy="116" r="44" />
        <path d="M150 150L155 155" />
        <path d="M159 159L168 168" strokeWidth="23" strokeLinecap="round" />
      </>
    ),
  },
  {
    label: "Planen",
    active: true,
    icon: (
      <>
        <path d="M102 22L66 38Q54 43 54 54Q54 62 66 66L112 80Q125 84 125 95Q125 104 112 110L78 124" />
        <circle cx="102" cy="22" r="8" fill="currentColor" />
        <circle cx="78" cy="124" r="8" fill="currentColor" />
      </>
    ),
  },
  {
    label: "Aufzeichnen",
    icon: (
      <>
        <circle cx="90" cy="90" r="71" />
        <circle cx="90" cy="90" r="33" />
      </>
    ),
  },
  {
    label: "Meine Seite",
    icon: (
      <>
        <circle cx="90" cy="52" r="30" />
        <path d="M64 98Q90 114 116 98Q130 94 138 106Q148 124 149 150Q148 161 136 161H44Q32 161 31 150Q32 124 42 106Q50 94 64 98Z" />
      </>
    ),
  },
];

export default function App() {
  return (
    <div className="min-h-screen flex flex-col bg-white font-[Roboto,sans-serif]">
      <StatusBar />
      <SearchHeader />
      <div className="grid grid-cols-[231fr_284fr_263fr_213fr] h-[62px] pl-[29px] pt-[2px] bg-[#6e6e6e] text-white text-[37px] leading-none border-b border-[#555]">
        {stats.map(({ icon, value }) => (
          <div key={icon} className="flex items-center gap-2 whitespace-nowrap">
            <StatIcon name={icon} />
            {value}
          </div>
        ))}
      </div>
      <ElevationChart />
      <MapView />
      <div className="grid grid-cols-2 gap-[22px] px-[11px] pt-[17px] pb-4 bg-[#4a4a4a] border-y border-[#353535] text-[40px] font-medium">
        <button className="h-[101px] pt-1 rounded-[5px] bg-white text-[#212121] shadow-md">NAVIGIEREN</button>
        <button className="h-[101px] pt-1 rounded-[5px] bg-[#78182c] text-white shadow-md">PLANUNG SPEICHERN</button>
      </div>
      <nav className="grid grid-cols-5 h-[158px] pt-[26px] bg-white text-[34px] leading-[40px] text-[#3a3a3a]">
        {navItems.map(item => (
          <a
            key={item.label}
            href="#"
            className={
              item.active
                ? "flex flex-col items-center gap-[10px] whitespace-nowrap text-[40px] text-[#7a1128]"
                : "flex flex-col items-center gap-3 whitespace-nowrap"
            }
          >
            <svg viewBox="0 0 180 180" className="size-[60px]" fill="none" stroke="currentColor" strokeWidth="12" strokeLinejoin="round">
              {item.icon}
            </svg>
            {item.label}
          </a>
        ))}
      </nav>
      <div className="flex justify-center items-center h-[43px] bg-[#fafafa]">
        <div className="w-[271px] h-[11px] rounded-full bg-[#ababab]" />
      </div>
    </div>
  );
}
